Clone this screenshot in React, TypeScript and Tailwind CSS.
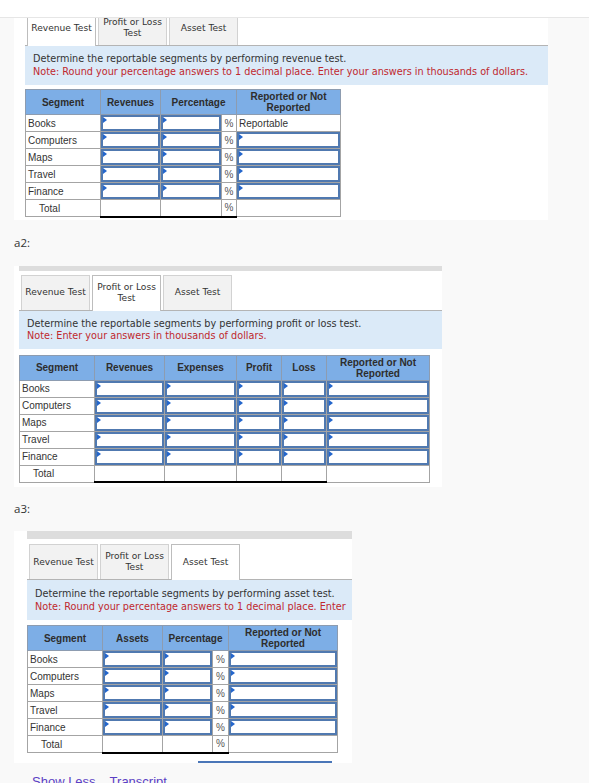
import React from "react";

const verdana = "font-['DejaVu_Sans',Verdana,sans-serif]";
const arial = "font-['Liberation_Sans',Arial,sans-serif]";

type Kind = "input" | "pct" | "total" | "totalPct" | "empty" | "reportable";

const TABS = [
  ["Revenue Test"],
  ["Profit or Loss", "Test"],
  ["Asset Test"],
];

function Tabs({ active }: { active: number }) {
  return (
    <div className="flex items-end gap-[2px] border-b border-[#b4b4b4] pl-[2px]">
      {TABS.map((lines, i) => (
        <div
          key={i}
          className={
            "flex h-[35px] w-[69px] flex-col items-center justify-center border border-b-0 text-center text-[9.1px] leading-[11px] text-[#333] " +
            verdana +
            (i === active
              ? " -mb-px h-[36px] border-[#bdbdbd] bg-white"
              : " border-[#d2d2d2] bg-[#f2f2f2]")
          }
        >
          {lines.map((l) => (
            <span key={l}>{l}</span>
          ))}
        </div>
      ))}
    </div>
  );
}

function Info({ line, note, h }: { line: string; note: string; h: string }) {
  return (
    <div
      className={
        "overflow-hidden whitespace-nowrap bg-[#dbeaf8] pl-[8px] text-[9.7px] leading-[12.5px] " +
        verdana +
        " " +
        h
      }
    >
      <div className="text-[#333]">{line}</div>
      <div className="text-[#c0282e]">{note}</div>
    </div>
  );
}

function InputBox() {
  return (
    <div className="relative h-[16px] border-2 border-[#5079b0] bg-white">
      <span className="absolute left-0 top-0 h-0 w-0 border-y-[3px] border-l-[4px] border-y-transparent border-l-[#2466cc]" />
    </div>
  );
}

function Cell({ kind }: { kind: Kind }) {
  const base = "border border-[#a4a4a4] p-0 align-middle";
  if (kind === "input") {
    return (
      <td className={base}>
        <InputBox />
      </td>
    );
  }
  if (kind === "pct" || kind === "totalPct") {
    return (
      <td
        className={
          base +
          " text-center text-[10px] text-[#555] " +
          arial +
          (kind === "totalPct" ? " border-b-2 border-b-black" : "")
        }
      >
        %
      </td>
    );
  }
  if (kind === "total") {
    return <td className={base + " border-b-2 border-b-black"} />;
  }
  if (kind === "reportable") {
    return (
      <td className={base + " pl-[2px] text-[10px] text-[#333] " + arial}>
        Reportable
      </td>
    );
  }
  return <td className={base} />;
}

function Grid({
  widths,
  headers,
  rows,
}: {
  widths: number[];
  headers: [string[], number][];
  rows: Kind[][];
}) {
  const names = ["Books", "Computers", "Maps", "Travel", "Finance", "Total"];
  return (
    <table
      className={"table-fixed border-collapse border border-[#999] " + arial}
      style={{ width: widths.reduce((a, b) => a + b, 0) }}
    >
      <colgroup>
        {widths.map((w, i) => (
          <col key={i} style={{ width: w }} />
        ))}
      </colgroup>
      <thead>
        <tr className="h-[25px]">
          {headers.map(([lines, span], i) => (
            <th
              key={i}
              colSpan={span}
              className="border border-[#8d9cb0] bg-[#7daee6] p-0 text-center text-[10px] font-bold leading-[11px] text-[#2d2d2d]"
            >
              {lines.map((l) => (
                <div key={l}>{l}</div>
              ))}
            </th>
          ))}
        </tr>
      </thead>
      <tbody>
        {rows.map((r, i) => (
          <tr key={i} className="h-[17px]">
            <td
              className={
                "border border-[#a4a4a4] p-0 text-[10px] text-[#333] " +
                (i === 5 ? "pl-[13px]" : "pl-[2px]")
              }
            >
              {names[i]}
            </td>
            {r.map((k, j) => (
              <Cell key={j} kind={k} />
            ))}
          </tr>
        ))}
      </tbody>
    </table>
  );
}

const pctRow: Kind[] = ["input", "input", "pct", "input"];
const pctTotal: Kind[] = ["total", "total", "totalPct", "empty"];
const reported: string[] = ["Reported or Not", "Reported"];

export default function App() {
  return (
    <div className="h-[783px] overflow-hidden bg-[#f9f9f9]">
      <div className="h-[18px] border-b border-[#e6e6e6] bg-white" />

      {/* a1 */}
      <div className="ml-[14px] w-[534px] overflow-hidden bg-white pl-[11px] pb-[2px]">
        <div className="-mt-[8px]">
          <Tabs active={0} />
        </div>
        <Info
          h="h-[39px] pt-[7px]"
          line="Determine the reportable segments by performing revenue test."
          note="Note: Round your percentage answers to 1 decimal place. Enter your answers in thousands of dollars."
        />
        <div className="mt-[4px]">
          <Grid
            widths={[75, 60, 61, 15, 104]}
            headers={[
              [["Segment"], 1],
              [["Revenues"], 1],
              [["Percentage"], 2],
              [reported, 1],
            ]}
            rows={[
              ["input", "input", "pct", "reportable"],
              pctRow,
              pctRow,
              pctRow,
              pctRow,
              pctTotal,
            ]}
          />
        </div>
      </div>

      <div className="flex h-[46px] items-center pl-[14px] font-['Open_Sans',sans-serif] text-[11.5px] text-[#333]">
        a2:
      </div>

      {/* a2 */}
      <div className="ml-[14px] w-[428px] bg-white pl-[5px] pb-[4px]">
        <div className="h-[5px] bg-[#dddddd]" />
        <div className="mt-[4px]">
          <Tabs active={1} />
        </div>
        <Info
          h="h-[38px] pt-[7px]"
          line="Determine the reportable segments by performing profit or loss test."
          note="Note: Enter your answers in thousands of dollars."
        />
        <div className="mt-[6px]">
          <Grid
            widths={[75, 70, 72, 45, 45, 103]}
            headers={[
              [["Segment"], 1],
              [["Revenues"], 1],
              [["Expenses"], 1],
              [["Profit"], 1],
              [["Loss"], 1],
              [reported, 1],
            ]}
            rows={[
              ["input", "input", "input", "input", "input"],
              ["input", "input", "input", "input", "input"],
              ["input", "input", "input", "input", "input"],
              ["input", "input", "input", "input", "input"],
              ["input", "input", "input", "input", "input"],
              ["total", "total", "total", "total", "empty"],
            ]}
          />
        </div>
      </div>

      <div className="flex h-[44px] items-center pl-[14px] font-['Open_Sans',sans-serif] text-[11.5px] text-[#333]">
        a3:
      </div>

      {/* a3 */}
      <div className="ml-[14px] w-[338px] bg-white pl-[13px]">
        <div className="h-[8px] bg-[#dddddd]" />
        <div className="mt-[5px]">
          <Tabs active={2} />
        </div>
        <Info
          h="h-[40px] pt-[8px]"
          line="Determine the reportable segments by performing asset test."
          note="Note: Round your percentage answers to 1 decimal place. Enter"
        />
        <div className="mt-[5px]">
          <Grid
            widths={[75, 60, 50, 16, 109]}
            headers={[
              [["Segment"], 1],
              [["Assets"], 1],
              [["Percentage"], 2],
              [reported, 1],
            ]}
            rows={[pctRow, pctRow, pctRow, pctRow, pctRow, pctTotal]}
          />
        </div>
        <div className="ml-[171px] mt-[7px] h-[2px] w-[134px] bg-[#4a76b8]" />
      </div>

      <div className={"mt-[9px] flex gap-[14px] pl-[32px] text-[13px] text-[#5b3fc4] " + arial}>
        <span>Show Less</span>
        <span>Transcript</span>
      </div>
    </div>
  );
}
